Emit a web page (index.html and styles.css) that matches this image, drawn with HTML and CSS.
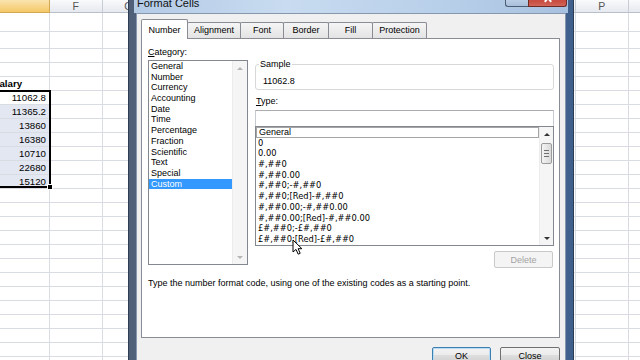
FILE: index.html
```html
<!DOCTYPE html>
<html lang="en">
<head>
  <meta charset="UTF-8" />
  <meta name="viewport" content="width=device-width, initial-scale=1.0"/>
  <title>Format Cells</title>
  <link rel="stylesheet" href="styles.css">
</head>
<body>
  <div class="screen">
    <div id="sheet" class="sheet"></div>
    <div class="range"><span class="handle"></span></div>

    <div class="dialog">
      <div class="titlebar">
        <span class="title">Format Cells</span>
        <span class="cap help"></span>
        <span class="cap close"></span>
      </div>
      <div class="body">
        <div class="tabs">
          <div class="tab on">Number</div>
          <div class="tab">Alignment</div>
          <div class="tab">Font</div>
          <div class="tab">Border</div>
          <div class="tab">Fill</div>
          <div class="tab">Protection</div>
        </div>
        <div class="pane">
          <div class="top">
            <div class="catcol">
              <div class="label"><u>C</u>ategory:</div>
              <div class="listbox cat">
                <ul class="items">
                  <li>General</li>
                  <li>Number</li>
                  <li>Currency</li>
                  <li>Accounting</li>
                  <li>Date</li>
                  <li>Time</li>
                  <li>Percentage</li>
                  <li>Fraction</li>
                  <li>Scientific</li>
                  <li>Text</li>
                  <li>Special</li>
                  <li class="picked">Custom</li>
                </ul>
                <div class="vscroll off">
                  <span class="arrow up"></span>
                  <span class="fill"></span>
                  <span class="arrow down"></span>
                </div>
              </div>
            </div>
            <div class="typecol">
              <fieldset class="sample">
                <legend>Sample</legend>
                <div class="sample-value">11062.8</div>
              </fieldset>
              <div class="label type-label"><u>T</u>ype:</div>
              <input class="typebox" type="text" value="">
              <div class="listbox codes">
                <ul class="items">
                  <li class="current">General</li>
                  <li>0</li>
                  <li>0.00</li>
                  <li>#,##0</li>
                  <li>#,##0.00</li>
                  <li>#,##0;-#,##0</li>
                  <li>#,##0;[Red]-#,##0</li>
                  <li>#,##0.00;-#,##0.00</li>
                  <li>#,##0.00;[Red]-#,##0.00</li>
                  <li>£#,##0;-£#,##0</li>
                  <li>£#,##0;[Red]-£#,##0</li>
                </ul>
                <div class="vscroll">
                  <span class="arrow up"></span>
                  <span class="thumb"></span>
                  <span class="fill"></span>
                  <span class="arrow down"></span>
                </div>
              </div>
              <button class="btn delete" disabled>Delete</button>
            </div>
          </div>
          <p class="hint">Type the number format code, using one of the existing codes as a starting point.</p>
        </div>
        <div class="actions">
          <button class="btn ok">OK</button>
          <button class="btn close-btn">Close</button>
        </div>
      </div>
    </div>

    <svg class="cursor" width="12" height="17" viewBox="0 0 12 17">
      <path d="M1 1 L1 13 L4 10.4 L6.2 15.2 L8.2 14.3 L6.1 9.7 L9.9 9.7 Z" fill="#fff" stroke="#000" stroke-width="1" stroke-linejoin="round"/>
    </svg>
  </div>

  <script>
    const cols = "EFGHIJKLMNOPQ".split("");
    // only these headers peek out around the dialog
    const labelled = "FGP";
    const salaries = ["11062.8", "11365.2", "13860", "16380", "10710", "22680", "15120"];
    const sheet = document.getElementById("sheet");

    cols.forEach(c => {
      const head = document.createElement("div");
      head.className = c === "E" ? "col on" : "col";
      if (labelled.includes(c)) head.textContent = c;
      sheet.appendChild(head);
    });

    for (let r = 1; r <= 25; r++) {
      cols.forEach(c => {
        const cell = document.createElement("div");
        cell.className = "cell";
        if (c === "E" && r === 5) {
          cell.textContent = "Salary";
          cell.classList.add("head");
        }
        if (c === "E" && r >= 6 && r <= 12) {
          cell.textContent = salaries[r - 6];
          if (r > 6) cell.classList.add("sel");
        }
        sheet.appendChild(cell);
      });
    }
  </script>
</body>
</html>
```

FILE: styles.css
```css
* {
  box-sizing: border-box;
}
body {
  margin: 0;
  font-family: 'Liberation Sans', Arial, sans-serif;
  background: #fff;
  color: #000;
}
.screen {
  position: relative;
  width: 640px;
  height: 360px;
  overflow: hidden;
}

/* spreadsheet behind the dialog */
.sheet {
  display: grid;
  grid-template-columns: 59px repeat(12, 52.6px);
  grid-template-rows: 13px 19px 17px;
  grid-auto-rows: 14px;
  margin-left: -9px;
}
.col {
  background: linear-gradient(#f9fafc, #e6e9ee);
  border-right: 1px solid #c8cdd5;
  border-bottom: 1px solid #b9bfc9;
  color: #555;
  font-size: 10.5px;
  line-height: 12px;
  text-align: center;
}
.col.on {
  background: linear-gradient(#fbe4b0, #f4c867);
  border-color: #d4a851;
}
.cell {
  border-right: 1px solid #d9dde3;
  border-bottom: 1px solid #d9dde3;
  font-size: 9.7px;
  line-height: 13px;
  text-align: right;
  padding-right: 3px;
  white-space: nowrap;
}
.cell.head {
  text-align: left;
  font-weight: bold;
  padding-left: 2px;
}
.cell.sel {
  background: #e3e7f2;
}
.range {
  position: absolute;
  left: -4px;
  top: 90px;
  width: 55px;
  height: 98px;
  border: 2px solid #000;
}
.handle {
  position: absolute;
  right: -4px;
  bottom: -4px;
  width: 6px;
  height: 6px;
  background: #000;
  border: 1px solid #fff;
}

/* dialog window */
.dialog {
  position: absolute;
  left: 128px;
  top: -8px;
  width: 446px;
  height: 380px;
  border: 1px solid #2f3d52;
  background: linear-gradient(90deg, #4f5f78, #6f88ab 30%, #7d96b8 70%, #3f5f8c);
}
.titlebar {
  display: flex;
  align-items: flex-start;
  height: 20px;
  margin: 0 5px;
  background: linear-gradient(90deg, #b4cbe6, #c8dbf0 35%, #b9d0ea 70%, #a7c1e0);
}
.title {
  padding-left: 3px;
  font-size: 11px;
  line-height: 20px;
  color: #111;
}
.cap {
  position: relative;
  height: 14px;
  border: 1px solid #4d5d73;
  border-top: none;
}
.help {
  width: 23px;
  margin-left: auto;
  background: linear-gradient(#d3e1f1, #a8bedb);
  border-radius: 0 0 0 3px;
  border-right: none;
}
.close {
  width: 39px;
  margin-right: 1px;
  background: linear-gradient(#e79b92, #c74b3f 60%, #d2665a);
  border-color: #6e2a24;
  border-radius: 0 0 3px 0;
}
/* bottom stroke of the white X glyph */
.close::before,
.close::after {
  content: "";
  position: absolute;
  left: 18px;
  top: 0;
  width: 2px;
  height: 10px;
  background: #fff;
  transform: rotate(40deg);
}
.close::after {
  transform: rotate(-40deg);
}
.body {
  height: 360px;
  margin: 0 7px;
  padding: 5px 5px 0 4px;
  background: #f0f0f0;
  border: 1px solid #8797ad;
  border-bottom: none;
}

.tabs {
  display: flex;
  align-items: flex-end;
  height: 19px;
}
.tab {
  height: 16px;
  margin-left: -1px;
  border: 1px solid #898c95;
  border-bottom: none;
  background: linear-gradient(#f5f5f5, #e3e3e3);
  font-size: 9px;
  line-height: 15px;
  text-align: center;
  border-radius: 2px 2px 0 0;
}
.tab.on {
  position: relative;
  z-index: 1;
  height: 20px;
  margin-left: 0;
  margin-bottom: -1px;
  padding-top: 3px;
  background: #fff;
}
.tab:nth-child(1) { width: 47px; }
.tab:nth-child(2) { width: 54px; }
.tab:nth-child(3) { width: 44px; }
.tab:nth-child(4) { width: 46px; }
.tab:nth-child(5) { width: 45px; }
.tab:nth-child(6) { width: 55px; }

.pane {
  height: 300px;
  padding: 7px 5px 0 6px;
  background: #fff;
  border: 1px solid #898c95;
  font-size: 9px;
}
.top {
  display: flex;
  gap: 7px;
}
.catcol {
  width: 100px;
}
.typecol {
  flex: 1;
}
.label {
  height: 14px;
  line-height: 12px;
}
.listbox {
  display: flex;
  border: 1px solid #828790;
  background: #fff;
}
.listbox.cat {
  height: 205px;
}
.items {
  flex: 1;
  margin: 0;
  padding: 0;
  list-style: none;
}
.items li {
  height: 10.7px;
  line-height: 10.7px;
  padding-left: 2px;
  white-space: nowrap;
}
.items li.picked {
  background: #3399ff;
  color: #fff;
}
.vscroll {
  display: flex;
  flex-direction: column;
  width: 15px;
  background: #f5f5f5;
  border-left: 1px solid #ececec;
}
.vscroll .fill {
  flex: 1;
}
.arrow {
  display: flex;
  align-items: center;
  justify-content: center;
  height: 14px;
}
.arrow::before {
  content: "";
  border-left: 3px solid transparent;
  border-right: 3px solid transparent;
}
.arrow.up::before {
  border-bottom: 3px solid #333;
}
.arrow.down::before {
  border-top: 3px solid #333;
}
.vscroll.off .arrow.up::before {
  border-bottom-color: #b5b5b5;
}
.vscroll.off .arrow.down::before {
  border-top-color: #b5b5b5;
}
.thumb {
  display: flex;
  align-items: center;
  justify-content: center;
  height: 21px;
  margin: 2px 1px 0;
  background: linear-gradient(90deg, #f4f4f4, #dadada);
  border: 1px solid #9b9b9b;
  border-radius: 2px;
}
.thumb::after {
  content: "";
  width: 5px;
  height: 7px;
  background: repeating-linear-gradient(#6f6f6f 0 1px, transparent 1px 3px);
}

.sample {
  min-width: 0;
  margin: 12px 0 0;
  padding: 0 0 2px 3px;
  border: 1px solid #d8d8d8;
  border-radius: 3px;
}
.sample legend {
  padding: 0 1px;
  line-height: 12px;
}
.sample-value {
  margin-top: 5px;
  padding-left: 4px;
  line-height: 12px;
}
.type-label {
  margin-top: 5px;
  padding-left: 1px;
}
.typebox {
  display: block;
  width: 100%;
  height: 17px;
  margin: 1px 0 0;
  padding: 0;
  border: 1px solid #c8cbd1;
  border-top-color: #abadb3;
  outline: none;
  background: #fff;
}
.listbox.codes {
  height: 120px;
  margin-top: -1px;
}
.listbox.codes .items li {
  font-family: 'DejaVu Sans', sans-serif;
  font-size: 8.3px;
}
.listbox.codes .items li.current {
  border: 1px solid #a5a5a5;
  line-height: 9px;
  font-family: 'Liberation Sans', Arial, sans-serif;
  font-size: 9px;
}
.listbox.codes .vscroll {
  width: 14px;
}

.btn {
  display: block;
  height: 17px;
  padding: 0;
  font-family: inherit;
  font-size: 9px;
  color: #000;
  background: linear-gradient(#f3f3f3, #ebebeb 50%, #dddddd 50%, #d0d0d0);
  border: 1px solid #707070;
  border-radius: 2px;
}
.btn.delete {
  width: 59px;
  margin: 5px 1px 0 auto;
  color: #a3a3a3;
  background: #f4f4f4;
  border-color: #c9c9c9;
}
.hint {
  margin: 9px 0 0;
  line-height: 12px;
}
.actions {
  display: flex;
  justify-content: flex-end;
  gap: 9px;
  margin-top: 9px;
}
.btn.ok {
  width: 59px;
  border-color: #3c7fb1;
  box-shadow: inset 0 0 0 1px #b8dcf4;
}
.close-btn {
  width: 60px;
}

.cursor {
  position: absolute;
  left: 292px;
  top: 239px;
}
```
